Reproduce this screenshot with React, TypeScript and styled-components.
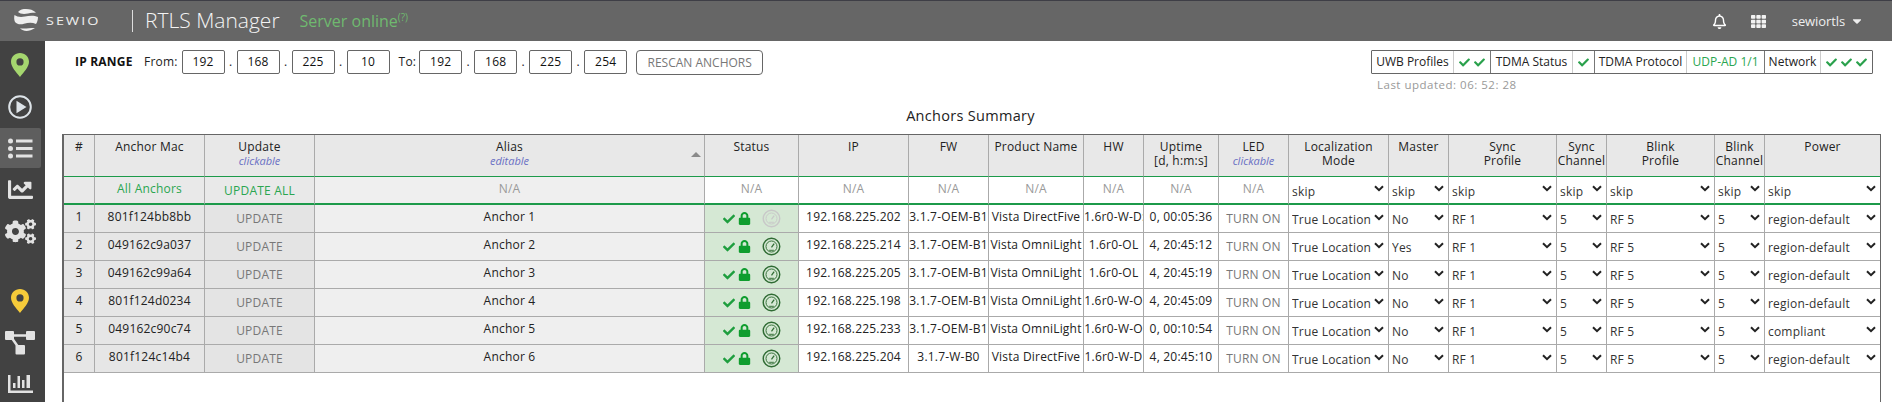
import React from 'react';
import styled, { createGlobalStyle } from 'styled-components';
import { FaCheck, FaLock, FaRegBell, FaTh, FaCaretDown, FaCogs, FaChartLine } from 'react-icons/fa';

const chevron = "url(\"data:image/svg+xml,%3Csvg xmlns='http://www.w3.org/2000/svg' width='10' height='7' viewBox='0 0 10 7'%3E%3Cpath d='M1 1.200l4 4 4-4' fill='none' stroke='%23222' stroke-width='2'/%3E%3C/svg%3E\")";

const Global = createGlobalStyle`
  html, body { margin: 0; padding: 0; height: 100%; background: #fff; overflow: hidden; }
  #root { height: 100%; }
  * { box-sizing: border-box; }
  body { font-family: "Open Sans", "Liberation Sans", sans-serif; font-size: 12px; letter-spacing: 0.2px; color: #222; }
`;

const Page = styled.div`display: flex; flex-direction: column; height: 402px;`;
const Header = styled.header`
  height: 41px; flex: none; background: #666; border-top: 1px solid #3e3e46;
  display: flex; align-items: center; color: #fff; padding: 0 28px 0 14px;
`;
const LogoMark = styled.svg`width: 24px; height: 22px; flex: none; margin-top: -2px;`;
const LogoWord = styled.span`
  font-size: 11.500px; letter-spacing: 1.600px; margin-left: 8px; width: 62px; margin-top: -2px;
  color: #eee; font-weight: 400; text-transform: uppercase; white-space: nowrap;
  display: inline-block; transform: scaleX(1.25); transform-origin: left;
`;
const Title = styled.span`
  margin-left: 24px; padding-left: 12px; border-left: 1px solid #ddd; height: 22px; line-height: 20px;
  font-size: 21px; font-weight: 300; letter-spacing: 0; white-space: nowrap; color: #f4f4f4;
`;
const Online = styled.span`margin-left: 20px; font-size: 16px; color: #6fb96f; letter-spacing: 0; white-space: nowrap; sup { font-size: 10px; line-height: 0; }`;
const HeaderRight = styled.div`margin-left: auto; display: flex; align-items: center;`;
const GridIcon = styled(FaTh)`margin-left: 24px; color: #f2f2f2;`;
const UserName = styled.span`font-size: 13px; margin-left: 26px; color: #eee; letter-spacing: -0.100px;`;
const Caret = styled(FaCaretDown)`margin-left: 5px; color: #eee;`;
const Body = styled.div`flex: 1; display: flex; min-height: 0;`;
const Sidebar = styled.nav`width: 45px; flex: none; background: #424242; display: flex; flex-direction: column; padding-top: 4px;`;
const NavItem = styled.div<{ $active?: boolean }>`
  width: 41px; height: 40px; flex: none; display: flex; align-items: center; justify-content: center;
  border-radius: 0 2px 2px 0; background: ${p => (p.$active ? '#5e5e5e' : 'transparent')};
  margin-bottom: 1.500px; color: #e2e2e2;
`;
const NavDivider = styled.div`width: 41px; height: 1px; background: #6e6e6e; margin: 12.500px 0 16px;`;
const NavIcon = styled.svg`width: 41px; height: 28px; display: block;`;
const Main = styled.main`flex: 1; min-width: 0; display: flex; flex-direction: column; padding: 9px 11px 0 17px;`;
const TopRow = styled.div`display: flex; justify-content: space-between; height: 57px; flex: none;`;
const RangeForm = styled.div`display: flex; align-items: flex-start; padding-left: 13px; height: 26px; line-height: 24px;`;
const RangeLabel = styled.b`font-size: 12px; margin-right: 8px; letter-spacing: 0.2px; color: #111; width: 61px; white-space: nowrap;`;
const FieldLabel = styled.span`margin-right: 4px; color: #222; white-space: nowrap;`;
const ToLabel = styled(FieldLabel)`margin-left: 9px; margin-right: 3px;`;
const Octet = styled.input`
  width: 43px; height: 24px; border: 1px solid #666; border-radius: 2px; text-align: center; padding: 0;
  font: inherit; letter-spacing: 0.2px; color: #111; background: #fff;
`;
const Dot = styled.span`width: 12px; text-align: center; color: #222;`;
const RescanButton = styled.button`
  margin-left: 9px; width: 127px; height: 25px; background: #fff; border: 1px solid #666; border-radius: 4px;
  color: #777; font: inherit; letter-spacing: 0; padding: 0;
`;
const StatusBlock = styled.div`margin-right: 8px; width: 502px;`;
const StatusBar = styled.div`display: flex; height: 24px; border: 1px solid #666; border-radius: 1px; line-height: 22px; letter-spacing: 0;`;
const StatusCell = styled.div<{ $w: number; $green?: boolean; $dark?: boolean }>`
  width: ${p => p.$w}px; flex: none; text-align: center; white-space: nowrap; overflow: hidden;
  border-right: 1px solid ${p => (p.$dark ? '#777' : '#ccc')};
  color: ${p => (p.$green ? '#2aa650' : '#222')};
  &:last-child { border-right: 0; }
`;
const Checks = styled.span`display: inline-flex; align-items: center; height: 22px; gap: 4px; color: #2aa14c;`;
const Updated = styled.div`margin: 3px 0 0 6px; color: #999; font-size: 11.500px; letter-spacing: 0.500px;`;
const TableTitle = styled.div`height: 27px; flex: none; text-align: center; font-size: 14.500px; line-height: 18px; color: #222; margin-right: 2px; letter-spacing: 0.3px;`;
const TableFrame = styled.div`flex: 1; border: 1px solid #666; border-bottom: 0; border-left-width: 2px; min-height: 0; overflow: hidden;`;
const Grid = styled.table`border-collapse: separate; border-spacing: 0; table-layout: fixed; width: 1816px;`;
const Col = styled.col<{ $w: number }>`width: ${p => p.$w}px;`;
const Th = styled.th`
  position: relative; height: 42px; background: #e8e8e8; font-weight: 400; font-size: 12px; line-height: 14px;
  vertical-align: top; padding: 5px 0 0; text-align: center; color: #222;
  border-right: 1px solid #aaa; border-bottom: 1px solid #1c9a4a; white-space: nowrap;
  &:last-child { border-right: 0; }
`;
const Hint = styled.i`display: block; font-size: 11px; color: #6a70c4; letter-spacing: 0;`;
const SortArrow = styled.span`
  position: absolute; right: 3px; top: 17px; width: 0; height: 0;
  border-left: 5px solid transparent; border-right: 5px solid transparent; border-bottom: 5px solid #8a8a8a;
`;
const Td = styled.td<{ $bg?: string; $color?: string; $up?: boolean }>`
  height: 28px; padding: ${p => (p.$up ? '0 0 4px' : '0')}; text-align: center; white-space: nowrap; overflow: hidden;
  background: ${p => p.$bg || '#fff'}; color: ${p => p.$color || '#222'};
  border-right: 1px solid #aaa; border-bottom: 1px solid #aaa;
  &:last-child { border-right: 0; }
`;
const FilterTd = styled(Td)`border-bottom: 2px solid #1c9a4a;`;
const Select = styled.select`
  display: block; width: 100%; height: 20px; margin-top: 2px; border: 0; padding: 0 12px 0 3px;
  appearance: none; background: transparent ${chevron} no-repeat right 4px top 4px;
  font: inherit; font-size: 12px; letter-spacing: 0.2px; color: #333; outline: none;
`;
const StatusIcons = styled.div`display: flex; align-items: center; justify-content: center; gap: 3px;`;
const Gauge = styled.svg<{ $faded?: boolean }>`width: 19px; height: 19px; margin-left: 8px; color: ${p => (p.$faded ? '#c8c8c8' : '#2f6b33')};`;

const cols = [31, 110, 110, 390, 94, 110, 80, 95, 60, 75, 70, 100, 60, 108, 50, 108, 50, 115];

const rows = [
  ['1', '801f124bb8bb', 'Anchor 1', '192.168.225.202', '3.1.7-OEM-B1', 'Vista DirectFive', '1.6r0-W-D:', '0, 00:05:36', 'No', 'region-default', true],
  ['2', '049162c9a037', 'Anchor 2', '192.168.225.214', '3.1.7-OEM-B1', 'Vista OmniLight', '1.6r0-OL', '4, 20:45:12', 'Yes', 'region-default', false],
  ['3', '049162c99a64', 'Anchor 3', '192.168.225.205', '3.1.7-OEM-B1', 'Vista OmniLight', '1.6r0-OL', '4, 20:45:19', 'No', 'region-default', false],
  ['4', '801f124d0234', 'Anchor 4', '192.168.225.198', '3.1.7-OEM-B1', 'Vista OmniLight', '1.6r0-W-O', '4, 20:45:09', 'No', 'region-default', false],
  ['5', '049162c90c74', 'Anchor 5', '192.168.225.233', '3.1.7-OEM-B1', 'Vista OmniLight', '1.6r0-W-O', '0, 00:10:54', 'No', 'compliant', false],
  ['6', '801f124c14b4', 'Anchor 6', '192.168.225.204', '3.1.7-W-B0', 'Vista DirectFive', '1.6r0-W-D', '4, 20:45:10', 'No', 'region-default', false],
] as const;

const Pick = ({ v }: { v: string }) => (
  <Select defaultValue={v}>
    <option>{v}</option>
  </Select>
);

const Pin = ({ color }: { color: string }) => (
  <NavIcon viewBox="0 0 41 28">
    <path fillRule="evenodd" fill={color} d="M20 2c-5 0-9 3.800-9 8.800C11 16 16 21 20 26c4-5 9-10 9-15.200C29 5.800 25 2 20 2zm0 5.300a3.600 3.600 0 1 1 0 7.200 3.600 3.600 0 0 1 0-7.200z" />
  </NavIcon>
);

const GaugeIcon = ({ faded }: { faded: boolean }) => (
  <Gauge $faded={faded} viewBox="0 0 20 20" fill="none" stroke="currentColor">
    <circle cx="10" cy="10" r="8.700" strokeWidth="1.500" />
    <circle cx="10" cy="10" r="5.800" strokeWidth="1" />
    <path d="M10 11l2.800-4" strokeWidth="1.300" />
    <path d="M7.500 14h5" strokeWidth="1" />
  </Gauge>
);

const Tick = () => <FaCheck size={11} />;

export default function App() {
  return (
    <Page>
      <Global />
      <Header>
        <LogoMark viewBox="0 0 24 22" fill="#eee">
          <path d="M4 3C6 .5 9 0 12 0c4 0 7 1 10 3.500-2 .5-5 0-8 1C10 5.500 6 5 4 3z" />
          <path d="M.5 6C3 8 7 8.500 11 7.500c4-1 9-1.500 13 .5 0 3-1 5.500-2 7-4-2-8-1.500-12-.2C6 16 3 15 1 13 0 11 0 8 .5 6z" />
          <path d="M6 19.200c4 .8 9-.2 15-.2-3 2-6 3-8.500 3C10 22 8 21 6 19.200z" />
        </LogoMark>
        <LogoWord>Sewio</LogoWord>
        <Title>RTLS Manager</Title>
        <Online>Server online<sup>(?)</sup></Online>
        <HeaderRight>
          <FaRegBell size={15} color="#fff" />
          <GridIcon size={15} />
          <UserName>sewiortls</UserName>
          <Caret size={14} />
        </HeaderRight>
      </Header>
      <Body>
        <Sidebar>
          <NavItem><Pin color="#a5d66f" /></NavItem>
          <NavItem>
            <NavIcon viewBox="0 0 41 28" fill="none">
              <circle cx="20" cy="14" r="10.800" stroke="#dde3e8" strokeWidth="2" />
              <path d="M16.500 7.800v12.400L26.500 14z" fill="#dde3e8" />
            </NavIcon>
          </NavItem>
          <NavItem $active>
            <NavIcon viewBox="0 0 41 28" fill="#e2e2e2">
              <circle cx="10.500" cy="7" r="2.500" /><circle cx="10.500" cy="14.500" r="2.500" /><circle cx="10.500" cy="22" r="2.500" />
              <path d="M16 5.500h16.500v3H16zM16 13h16.500v3H16zM16 20.500h16.500v3H16z" />
            </NavIcon>
          </NavItem>
          <NavItem><FaChartLine size={25} /></NavItem>
          <NavItem><FaCogs size={31} /></NavItem>
          <NavDivider />
          <NavItem><Pin color="#f6cb3a" /></NavItem>
          <NavItem>
            <NavIcon viewBox="0 0 41 28" fill="#e2e2e2">
              <rect x="5" y="2" width="9" height="9" rx="1" />
              <rect x="26" y="2" width="9" height="9" rx="1" />
              <rect x="15.500" y="16" width="9.500" height="9.500" rx="1" />
              <path d="M12 5.300h15v2.500H12zM11 10l2.200-1.200L19 17l-2.200 1.200z" />
            </NavIcon>
          </NavItem>
          <NavItem>
            <NavIcon viewBox="0 0 41 28" fill="#e2e2e2">
              <path d="M8 5h2.500v15.500H33V23H8z" />
              <path d="M13 13h2.500v5H13zM17.500 6H20v12h-2.500zM22 10h2.500v8H22zM26.500 5H30v13h-3.500z" />
            </NavIcon>
          </NavItem>
        </Sidebar>
        <Main>
          <TopRow>
            <RangeForm>
              <RangeLabel>IP RANGE</RangeLabel>
              <FieldLabel>From:</FieldLabel>
              <Octet defaultValue="192" /><Dot>.</Dot>
              <Octet defaultValue="168" /><Dot>.</Dot>
              <Octet defaultValue="225" /><Dot>.</Dot>
              <Octet defaultValue="10" />
              <ToLabel>To:</ToLabel>
              <Octet defaultValue="192" /><Dot>.</Dot>
              <Octet defaultValue="168" /><Dot>.</Dot>
              <Octet defaultValue="225" /><Dot>.</Dot>
              <Octet defaultValue="254" />
              <RescanButton>RESCAN ANCHORS</RescanButton>
            </RangeForm>
            <StatusBlock>
              <StatusBar>
                <StatusCell $w={82}>UWB Profiles</StatusCell>
                <StatusCell $w={37} $dark><Checks><Tick /><Tick /></Checks></StatusCell>
                <StatusCell $w={82}>TDMA Status</StatusCell>
                <StatusCell $w={22} $dark><Checks><Tick /></Checks></StatusCell>
                <StatusCell $w={92}>TDMA Protocol</StatusCell>
                <StatusCell $w={78} $green $dark>UDP-AD 1/1</StatusCell>
                <StatusCell $w={56}>Network</StatusCell>
                <StatusCell $w={51}><Checks><Tick /><Tick /><Tick /></Checks></StatusCell>
              </StatusBar>
              <Updated>Last updated: 06: 52: 28</Updated>
            </StatusBlock>
          </TopRow>
          <TableTitle>Anchors Summary</TableTitle>
          <TableFrame>
            <Grid>
              <colgroup>{cols.map((w, i) => <Col key={i} $w={w} />)}</colgroup>
              <thead>
                <tr>
                  <Th>#</Th>
                  <Th>Anchor Mac</Th>
                  <Th>Update<Hint>clickable</Hint></Th>
                  <Th>Alias<Hint>editable</Hint><SortArrow /></Th>
                  <Th>Status</Th>
                  <Th>IP</Th>
                  <Th>FW</Th>
                  <Th>Product Name</Th>
                  <Th>HW</Th>
                  <Th>Uptime<br />[d, h:m:s]</Th>
                  <Th>LED<Hint>clickable</Hint></Th>
                  <Th>Localization<br />Mode</Th>
                  <Th>Master</Th>
                  <Th>Sync<br />Profile</Th>
                  <Th>Sync<br />Channel</Th>
                  <Th>Blink<br />Profile</Th>
                  <Th>Blink<br />Channel</Th>
                  <Th>Power</Th>
                </tr>
              </thead>
              <tbody>
                <tr>
                  <FilterTd $bg="#e9e9e9" />
                  <FilterTd $bg="#e9e9e9" $color="#2aa650" $up>All Anchors</FilterTd>
                  <FilterTd $bg="#e9e9e9" $color="#2aa650">UPDATE ALL</FilterTd>
                  <FilterTd $bg="#efefef" $color="#999" $up>N/A</FilterTd>
                  <FilterTd $color="#999" $up>N/A</FilterTd>
                  <FilterTd $color="#999" $up>N/A</FilterTd>
                  <FilterTd $color="#999" $up>N/A</FilterTd>
                  <FilterTd $color="#999" $up>N/A</FilterTd>
                  <FilterTd $color="#999" $up>N/A</FilterTd>
                  <FilterTd $color="#999" $up>N/A</FilterTd>
                  <FilterTd $color="#999" $up>N/A</FilterTd>
                  {cols.slice(11).map((_, i) => <FilterTd key={i}><Pick v="skip" /></FilterTd>)}
                </tr>
                {rows.map(r => (
                  <tr key={r[0]}>
                    <Td $bg="#e6e6e6" $up>{r[0]}</Td>
                    <Td $bg="#e6e6e6" $up>{r[1]}</Td>
                    <Td $bg="#e4e4e4" $color="#777">UPDATE</Td>
                    <Td $bg="#efefef" $up>{r[2]}</Td>
                    <Td $bg="#d5e8d4">
                      <StatusIcons>
                        <FaCheck size={12} color="#1e9e3e" />
                        <FaLock size={13} color="#0f9d2e" />
                        <GaugeIcon faded={r[10]} />
                      </StatusIcons>
                    </Td>
                    <Td $up>{r[3]}</Td>
                    <Td $up>{r[4]}</Td>
                    <Td $up>{r[5]}</Td>
                    <Td $up>{r[6]}</Td>
                    <Td $up>{r[7]}</Td>
                    <Td $color="#777">TURN ON</Td>
                    <Td><Pick v="True Location" /></Td>
                    <Td><Pick v={r[8]} /></Td>
                    <Td><Pick v="RF 1" /></Td>
                    <Td><Pick v="5" /></Td>
                    <Td><Pick v="RF 5" /></Td>
                    <Td><Pick v="5" /></Td>
                    <Td><Pick v={r[9]} /></Td>
                  </tr>
                ))}
              </tbody>
            </Grid>
          </TableFrame>
        </Main>
      </Body>
    </Page>
  );
}
